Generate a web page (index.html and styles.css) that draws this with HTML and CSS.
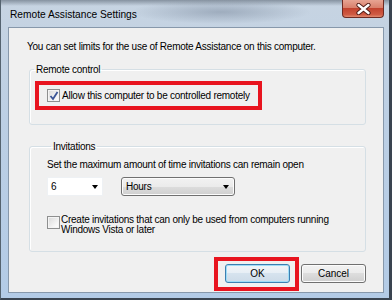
FILE: index.html
```html
<!DOCTYPE html>
<html lang="en">
<head>
    <meta charset="UTF-8">
    <title>Remote Assistance Settings</title>
    <link rel="stylesheet" href="styles.css">
</head>
<body>
    <div class="window">
        <div class="titlebar">
            <span class="title">Remote Assistance Settings</span>
            <span class="close-btn">
                <svg width="15" height="12" viewBox="0 0 15 12">
                    <path d="M2.5 2 L12.5 10 M12.5 2 L2.5 10" stroke="#4e1a14" stroke-width="4.2" stroke-linecap="round"/>
                    <path d="M2.5 2 L12.5 10 M12.5 2 L2.5 10" stroke="#fff" stroke-width="2.4" stroke-linecap="round"/>
                </svg>
            </span>
        </div>
        <div class="client">
            <p class="intro">You can set limits for the use of Remote Assistance on this computer.</p>

            <fieldset class="group">
                <legend>Remote control</legend>
                <div class="highlight option-box">
                    <span class="check checked">
                        <svg width="10" height="10" viewBox="0 0 10 10">
                            <path d="M1.5 5 L4 8 L8.5 1" fill="none" stroke="#3b5596" stroke-width="1.8"/>
                        </svg>
                    </span>
                    <span>Allow this computer to be controlled remotely</span>
                </div>
            </fieldset>

            <fieldset class="group invitations">
                <legend>Invitations</legend>
                <p class="hint">Set the maximum amount of time invitations can remain open</p>
                <div class="combo-row">
                    <span class="combo combo-edit">6<i class="arrow"></i></span>
                    <span class="combo combo-list">Hours<i class="arrow"></i></span>
                </div>
                <div class="option">
                    <span class="check"></span>
                    <span class="option-text">Create invitations that can only be used from computers running Windows Vista or later</span>
                </div>
            </fieldset>

            <div class="buttons">
                <span class="highlight ok-wrap">
                    <button class="btn default">OK</button>
                </span>
                <button class="btn">Cancel</button>
            </div>
        </div>
    </div>
</body>
</html>
```

FILE: styles.css
```css
body {
    margin: 0;
    width: 392px;
    height: 300px;
    overflow: hidden;
    background: #2e3640;
    font-family: "Liberation Sans", Arial, sans-serif;
    font-size: 10px;
    letter-spacing: -0.25px;
    color: #000;
}

.window {
    box-sizing: border-box;
    width: 392px;
    height: 300px;
    padding: 0 5px 5px 7px;
    border-left: 1px solid #55636f;
    border-right: 3px solid #3a4450;
    border-bottom: 2px solid #3a4450;
    background:
        linear-gradient(to bottom, rgba(80, 92, 106, 0.55) 0, rgba(80, 92, 106, 0) 6px),
        radial-gradient(ellipse 90px 12px at 220px 12px, rgba(110, 125, 145, 0.45), rgba(110, 125, 145, 0)),
        linear-gradient(to bottom, #c7d4e2, #bccfe4 40%, #b3cbe6);
    display: flex;
    flex-direction: column;
}

.titlebar {
    height: 27px;
    display: flex;
    justify-content: space-between;
    align-items: flex-start;
}

.title {
    padding: 8px 0 0 2px;
    font-size: 10.2px;
    letter-spacing: 0;
    line-height: 13px;
}

.close-btn {
    width: 42px;
    height: 18px;
    box-sizing: border-box;
    border: 1px solid #6e2a22;
    border-top: none;
    border-radius: 0 0 4px 4px;
    background: linear-gradient(to bottom, #e7a493 0, #d9806c 45%, #c2432f 50%, #cf5a43 85%, #e08a70 100%);
    display: flex;
    justify-content: center;
    align-items: center;
}

.client {
    flex: 1;
    background: #f0f0f0;
    border: 1px solid #8798ab;
    padding: 0 17px 0 0;
    display: flex;
    flex-direction: column;
}

.intro {
    margin: 12px 0 0 18px;
    line-height: 13px;
}

.group {
    margin: 10px 0 0 20px;
    padding: 0;
    border: 1px solid #d5dfe5;
    border-radius: 3px;
    box-shadow: inset 1px 1px 0 #fff;
}

.group legend {
    margin-left: 4px;
    padding: 0 2px;
    line-height: 13px;
}

.highlight {
    border: 4px solid #e8141f;
}

.option-box {
    display: flex;
    align-items: center;
    gap: 2px;
    width: 211px;
    height: 21px;
    margin: 5px 0 14px 5px;
    padding-left: 8px;
    white-space: nowrap;
}

.check {
    box-sizing: border-box;
    width: 13px;
    height: 13px;
    flex: none;
    border: 1px solid #8e8f8f;
    background: linear-gradient(135deg, #d8d8d8, #f6f6f6 70%, #fff);
    box-shadow: inset 0 0 0 1px #f4f4f4;
    display: flex;
    justify-content: center;
    align-items: center;
}

.invitations {
    margin-top: 15px;
    padding: 0 0 16px 17px;
}

.hint {
    margin: 5px 0 0 0;
    line-height: 13px;
}

.combo-row {
    display: flex;
    gap: 18px;
    margin-top: 6px;
}

.combo {
    box-sizing: border-box;
    height: 19px;
    display: flex;
    align-items: center;
    justify-content: space-between;
}

.combo-edit {
    width: 56px;
    padding: 0 4px 0 3px;
    background: #fff;
    border: 1px solid #eef1f4;
}

.combo-list {
    width: 114px;
    padding: 0 5px 0 4px;
    border: 1px solid #707070;
    border-radius: 3px;
    background: linear-gradient(to bottom, #f2f2f2 0, #ebebeb 50%, #dddddd 50%, #cfcfcf 100%);
    box-shadow: inset 0 0 0 1px #fcfcfc;
}

.arrow {
    width: 0;
    height: 0;
    border-left: 3.5px solid transparent;
    border-right: 3.5px solid transparent;
    border-top: 4px solid #000;
}

.option {
    display: flex;
    align-items: flex-start;
    gap: 1px;
    margin-top: 19px;
}

.option .check {
    margin-top: 1px;
}

.option-text {
    width: 276px;
    line-height: 10px;
}

.buttons {
    display: flex;
    justify-content: flex-end;
    align-items: flex-start;
    margin-top: 5px;
}

.ok-wrap {
    display: flex;
    padding: 3px 5px 4px 7px;
}

.btn {
    box-sizing: border-box;
    width: 65px;
    height: 19px;
    margin: 0;
    padding: 0;
    font: inherit;
    letter-spacing: 0;
    color: #000;
    border: 1px solid #707070;
    border-radius: 3px;
    background: linear-gradient(to bottom, #f2f2f2 0, #ebebeb 50%, #dddddd 50%, #cfcfcf 100%);
    box-shadow: inset 0 0 0 1px #fcfcfc;
}

.btn.default {
    border-color: #3c7fb1;
    box-shadow: inset 0 0 0 1px #9fdcf6;
    background: linear-gradient(to bottom, #f2f5f8 0, #e6eef5 50%, #d6e3ee 50%, #cddbe8 100%);
}

.buttons > .btn {
    margin: 7px 0 0 2px;
}
```
